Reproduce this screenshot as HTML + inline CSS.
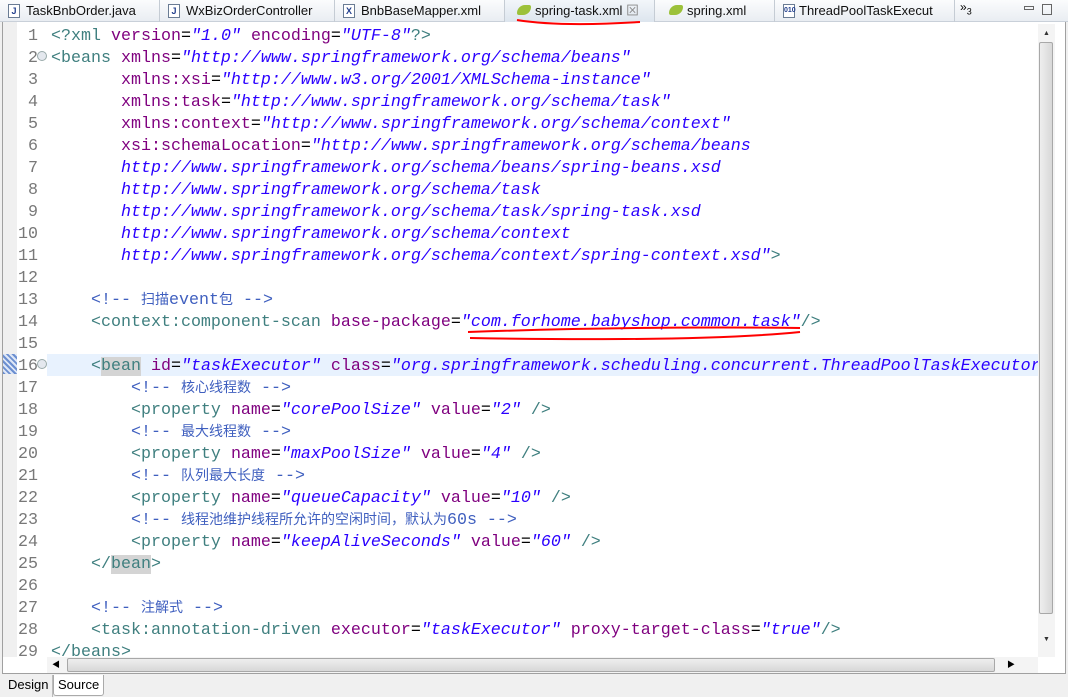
<!DOCTYPE html>
<html><head><meta charset="utf-8"><style>
*{margin:0;padding:0;box-sizing:border-box}
body{width:1068px;height:697px;overflow:hidden;background:#f0f0f0;font-family:"Liberation Sans","Noto Sans CJK SC",sans-serif;position:relative}
.tabs{position:absolute;left:0;top:0;width:1068px;height:22px;background:linear-gradient(#fbfcfd,#e9edf2);border-bottom:1px solid #c9d0d9}
.tab{position:absolute;top:0;height:22px;font-size:13px;line-height:21px;color:#111;border-right:1px solid #c5ccd4;padding-left:26px;white-space:nowrap}
.tab .ic{position:absolute;left:8px;top:4px;width:12px;height:14px;border:1px solid #6a7c94;background:#fff;font-size:9px;line-height:12px;text-align:center;color:#23408e;font-weight:bold}
.tab.act{background:linear-gradient(#f3f6fa,#dde5ee)}
.ed{position:absolute;left:2px;top:22px;width:1064px;height:652px;background:#fff;border:1px solid #a0a0a0;border-top:none}
.ruler{position:absolute;left:0;top:0;width:14px;height:635px;background:#f0f0f0}
.code{position:absolute;left:0;top:4px;font-family:"Liberation Mono","Noto Sans CJK SC",monospace;font-size:16.67px;line-height:22px;white-space:pre}
.ln{position:absolute;left:0;width:35px;text-align:right;color:#787878}
.tx{position:absolute;left:48px;height:22px}
.t{color:#3f7f7f}.a{color:#7f007f}.v{color:#2a00ff;font-style:italic}.c{color:#3f5fbf}.k{color:#000}
.cj{font-family:"Noto Sans CJK SC",sans-serif;font-size:14px;line-height:0}
.vs{position:absolute;left:1035px;top:2px;width:17px;height:633px;background:#f4f4f4}
.hs{position:absolute;left:44px;top:635px;width:991px;height:16px;background:#f4f4f4}
.bt{position:absolute;top:675px;height:22px;font-size:13px;line-height:20px;padding:0 4px}
</style></head><body>
<div class="tabs">
<div class="tab" style="left:0;width:160px"><span class="ic">J</span>TaskBnbOrder.java</div>
<div class="tab" style="left:160px;width:175px"><span class="ic">J</span>WxBizOrderController</div>
<div class="tab" style="left:335px;width:170px"><span class="ic">X</span>BnbBaseMapper.xml</div>
<div class="tab act" style="left:505px;width:150px;padding-left:30px"><span style="position:absolute;left:12px;top:5px;width:14px;height:10px;background:#9cc13a;border-radius:8px 2px 8px 2px"></span>spring-task.xml <span style="color:#888">⊠</span></div>
<div class="tab" style="left:655px;width:120px;padding-left:32px"><span style="position:absolute;left:14px;top:5px;width:14px;height:10px;background:#9cc13a;border-radius:8px 2px 8px 2px"></span>spring.xml</div>
<div class="tab" style="left:775px;width:180px;padding-left:24px"><span class="ic" style="font-size:7px">010</span>ThreadPoolTaskExecut</div>
<div style="position:absolute;left:960px;top:0;font-size:12px">»<sub style="font-size:9px">3</sub></div>
<div style="position:absolute;left:1024px;top:6px;width:10px;height:4px;border:1px solid #666"></div>
<div style="position:absolute;left:1042px;top:4px;width:10px;height:11px;border:1px solid #666"></div>
</div>
<div class="ed">
<div class="ruler"></div>
<div style="position:absolute;left:44px;top:332px;width:991px;height:22px;background:#e8f2fe"></div>
<div style="position:absolute;left:0;top:332px;width:14px;height:20px;background:repeating-linear-gradient(45deg,#6c8fd0 0 2px,#dde6f6 2px 4px)"></div>
<div class="code">
<div class="ln" style="top:0">1</div><div class="tx" style="top:0"><span class="t">&lt;?xml </span><span class="a">version</span>=<span class="v">"1.0"</span> <span class="a">encoding</span>=<span class="v">"UTF-8"</span><span class="t">?&gt;</span></div>
<div class="ln" style="top:22px">2</div><div class="tx" style="top:22px"><span class="t">&lt;beans </span><span class="a">xmlns</span>=<span class="v">"http://www.springframework.org/schema/beans"</span></div>
<div class="ln" style="top:44px">3</div><div class="tx" style="top:44px">       <span class="a">xmlns:xsi</span>=<span class="v">"http://www.w3.org/2001/XMLSchema-instance"</span></div>
<div class="ln" style="top:66px">4</div><div class="tx" style="top:66px">       <span class="a">xmlns:task</span>=<span class="v">"http://www.springframework.org/schema/task"</span></div>
<div class="ln" style="top:88px">5</div><div class="tx" style="top:88px">       <span class="a">xmlns:context</span>=<span class="v">"http://www.springframework.org/schema/context"</span></div>
<div class="ln" style="top:110px">6</div><div class="tx" style="top:110px">       <span class="a">xsi:schemaLocation</span>=<span class="v">"http://www.springframework.org/schema/beans</span></div>
<div class="ln" style="top:132px">7</div><div class="tx" style="top:132px"><span class="v">       http://www.springframework.org/schema/beans/spring-beans.xsd</span></div>
<div class="ln" style="top:154px">8</div><div class="tx" style="top:154px"><span class="v">       http://www.springframework.org/schema/task</span></div>
<div class="ln" style="top:176px">9</div><div class="tx" style="top:176px"><span class="v">       http://www.springframework.org/schema/task/spring-task.xsd</span></div>
<div class="ln" style="top:198px">10</div><div class="tx" style="top:198px"><span class="v">       http://www.springframework.org/schema/context</span></div>
<div class="ln" style="top:220px">11</div><div class="tx" style="top:220px"><span class="v">       http://www.springframework.org/schema/context/spring-context.xsd"</span><span class="t">&gt;</span></div>
<div class="ln" style="top:242px">12</div>
<div class="ln" style="top:264px">13</div><div class="tx" style="top:264px">    <span class="c">&lt;!-- <span class="cj">扫描</span>event<span class="cj">包</span> --&gt;</span></div>
<div class="ln" style="top:286px">14</div><div class="tx" style="top:286px">    <span class="t">&lt;context:component-scan </span><span class="a">base-package</span>=<span class="v">"com.forhome.babyshop.common.task"</span><span class="t">/&gt;</span></div>
<div class="ln" style="top:308px">15</div>
<div class="ln" style="top:330px">16</div><div class="tx" style="top:330px">    <span class="t">&lt;<span style="background:#d4d4d4">bean</span> </span><span class="a">id</span>=<span class="v">"taskExecutor"</span> <span class="a">class</span>=<span class="v">"org.springframework.scheduling.concurrent.ThreadPoolTaskExecutor</span></div>
<div class="ln" style="top:352px">17</div><div class="tx" style="top:352px">        <span class="c">&lt;!-- <span class="cj">核心线程数</span> --&gt;</span></div>
<div class="ln" style="top:374px">18</div><div class="tx" style="top:374px">        <span class="t">&lt;property </span><span class="a">name</span>=<span class="v">"corePoolSize"</span> <span class="a">value</span>=<span class="v">"2"</span> <span class="t">/&gt;</span></div>
<div class="ln" style="top:396px">19</div><div class="tx" style="top:396px">        <span class="c">&lt;!-- <span class="cj">最大线程数</span> --&gt;</span></div>
<div class="ln" style="top:418px">20</div><div class="tx" style="top:418px">        <span class="t">&lt;property </span><span class="a">name</span>=<span class="v">"maxPoolSize"</span> <span class="a">value</span>=<span class="v">"4"</span> <span class="t">/&gt;</span></div>
<div class="ln" style="top:440px">21</div><div class="tx" style="top:440px">        <span class="c">&lt;!-- <span class="cj">队列最大长度</span> --&gt;</span></div>
<div class="ln" style="top:462px">22</div><div class="tx" style="top:462px">        <span class="t">&lt;property </span><span class="a">name</span>=<span class="v">"queueCapacity"</span> <span class="a">value</span>=<span class="v">"10"</span> <span class="t">/&gt;</span></div>
<div class="ln" style="top:484px">23</div><div class="tx" style="top:484px">        <span class="c">&lt;!-- <span class="cj">线程池维护线程所允许的空闲时间，默认为</span>60s --&gt;</span></div>
<div class="ln" style="top:506px">24</div><div class="tx" style="top:506px">        <span class="t">&lt;property </span><span class="a">name</span>=<span class="v">"keepAliveSeconds"</span> <span class="a">value</span>=<span class="v">"60"</span> <span class="t">/&gt;</span></div>
<div class="ln" style="top:528px">25</div><div class="tx" style="top:528px">    <span class="t">&lt;/<span style="background:#d4d4d4">bean</span>&gt;</span></div>
<div class="ln" style="top:550px">26</div>
<div class="ln" style="top:572px">27</div><div class="tx" style="top:572px">    <span class="c">&lt;!-- <span class="cj">注解式</span> --&gt;</span></div>
<div class="ln" style="top:594px">28</div><div class="tx" style="top:594px">    <span class="t">&lt;task:annotation-driven </span><span class="a">executor</span>=<span class="v">"taskExecutor"</span> <span class="a">proxy-target-class</span>=<span class="v">"true"</span><span class="t">/&gt;</span></div>
<div class="ln" style="top:616px">29</div><div class="tx" style="top:616px"><span class="t">&lt;/beans&gt;</span></div>
</div>
<div style="position:absolute;left:34px;top:29px;width:10px;height:10px;border:1px solid #9aa;border-radius:50%;background:#e4e8ee"></div>
<div style="position:absolute;left:34px;top:337px;width:10px;height:10px;border:1px solid #9aa;border-radius:50%;background:#e4e8ee"></div>
<div class="vs"><div style="position:absolute;left:1px;top:18px;width:14px;height:572px;background:linear-gradient(90deg,#eee,#d8d8d8);border:1px solid #a8a8a8;border-radius:2px"></div><div style="position:absolute;left:5px;top:6px;font-size:7px;color:#333">▲</div><div style="position:absolute;left:5px;top:612px;font-size:7px;color:#333">▼</div></div>
<div class="hs"><div style="position:absolute;left:20px;top:1px;width:928px;height:14px;background:linear-gradient(#eee,#d8d8d8);border:1px solid #a8a8a8;border-radius:2px"></div><div style="position:absolute;left:5px;top:2px;font-size:8px">◀</div><div style="position:absolute;left:960px;top:2px;font-size:8px">▶</div></div>
</div>
<svg style="position:absolute;left:0;top:0" width="1068" height="345"><path d="M517 20 Q560 27 640 22" stroke="#f00" stroke-width="2" fill="none"/><path d="M468 332 Q640 326 800 328 M470 338 Q700 342 800 332" stroke="#f00" stroke-width="2" fill="none"/></svg>
<div class="bt" style="left:4px;border-right:1px solid #bbb">Design</div>
<div class="bt" style="left:53px;background:#fff;border:1px solid #aaa;border-top:none;border-radius:0 0 3px 3px;height:21px">Source</div>
</body></html>
